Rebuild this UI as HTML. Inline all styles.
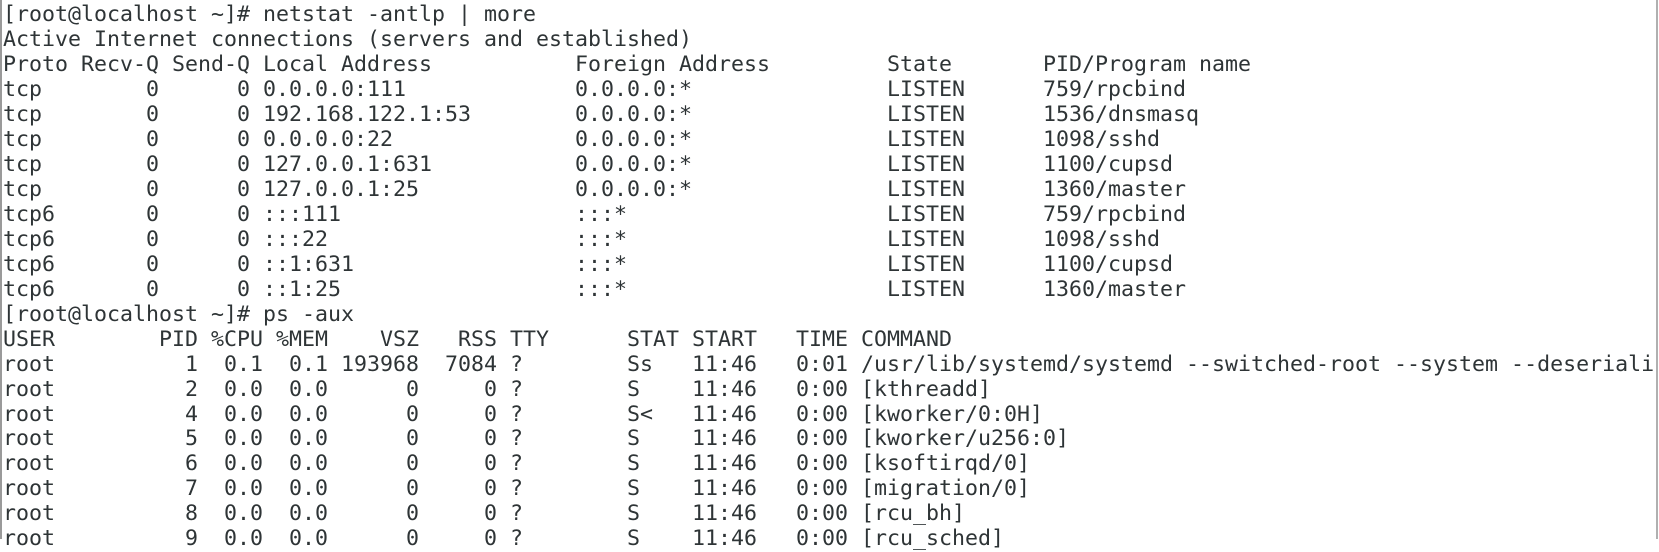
<!DOCTYPE html>
<html><head><meta charset="utf-8"><style>
html,body{margin:0;padding:0;background:#fff;width:1659px;height:539px;overflow:hidden}
.l{position:absolute;left:0;top:0;width:2px;height:539px;background:#9a9a9a}
.r{position:absolute;left:1656px;top:0;width:2px;height:539px;background:#b0b0b0}
pre{position:absolute;left:3px;top:3px;margin:0;font-family:"DejaVu Sans Mono","Liberation Mono",monospace;font-size:21.6px;line-height:24.97px;color:#2e3436;white-space:pre}
</style></head><body>
<div class="l"></div><div class="r"></div>
<pre>[root@localhost ~]# netstat -antlp | more
Active Internet connections (servers and established)
Proto Recv-Q Send-Q Local Address           Foreign Address         State       PID/Program name
tcp        0      0 0.0.0.0:111             0.0.0.0:*               LISTEN      759/rpcbind
tcp        0      0 192.168.122.1:53        0.0.0.0:*               LISTEN      1536/dnsmasq
tcp        0      0 0.0.0.0:22              0.0.0.0:*               LISTEN      1098/sshd
tcp        0      0 127.0.0.1:631           0.0.0.0:*               LISTEN      1100/cupsd
tcp        0      0 127.0.0.1:25            0.0.0.0:*               LISTEN      1360/master
tcp6       0      0 :::111                  :::*                    LISTEN      759/rpcbind
tcp6       0      0 :::22                   :::*                    LISTEN      1098/sshd
tcp6       0      0 ::1:631                 :::*                    LISTEN      1100/cupsd
tcp6       0      0 ::1:25                  :::*                    LISTEN      1360/master
[root@localhost ~]# ps -aux
USER        PID %CPU %MEM    VSZ   RSS TTY      STAT START   TIME COMMAND
root          1  0.1  0.1 193968  7084 ?        Ss   11:46   0:01 /usr/lib/systemd/systemd --switched-root --system --deseriali
root          2  0.0  0.0      0     0 ?        S    11:46   0:00 [kthreadd]
root          4  0.0  0.0      0     0 ?        S&lt;   11:46   0:00 [kworker/0:0H]
root          5  0.0  0.0      0     0 ?        S    11:46   0:00 [kworker/u256:0]
root          6  0.0  0.0      0     0 ?        S    11:46   0:00 [ksoftirqd/0]
root          7  0.0  0.0      0     0 ?        S    11:46   0:00 [migration/0]
root          8  0.0  0.0      0     0 ?        S    11:46   0:00 [rcu_bh]
root          9  0.0  0.0      0     0 ?        S    11:46   0:00 [rcu_sched]</pre>
</body></html>
